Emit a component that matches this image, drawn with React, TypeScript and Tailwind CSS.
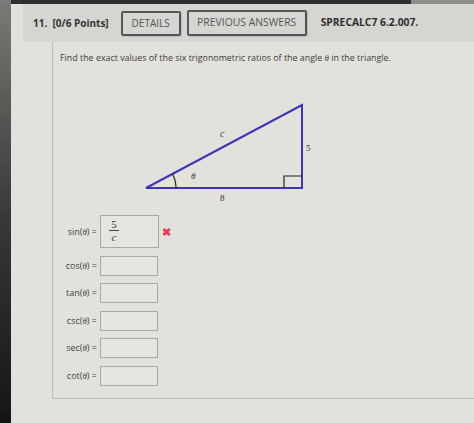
import React from "react";

const font = { fontFamily: '"Open Sans", "Liberation Sans", sans-serif' };
const serif = { fontFamily: '"Liberation Serif", "DejaVu Serif", serif' };

function Row({ fn, children, mt }: { fn: string; children?: React.ReactNode; mt: string }) {
  return (
    <div className={`flex items-center ${mt}`}>
      <div className="w-[40px] text-right text-[9px] text-[#444] pr-[3px] whitespace-nowrap">
        {fn}(<span style={serif} className="italic">θ</span>) =
      </div>
      {children}
    </div>
  );
}

function Box() {
  return <div className="w-[58px] h-[20px] border border-[#a9a9a4] bg-[#e6e5e0]" />;
}

export default function App() {
  return (
    <div style={font} className="w-[474px] h-[423px] bg-[#e2e1dc] flex overflow-hidden">
      <div className="w-[11px] h-full bg-gradient-to-b from-[#7a7a78] via-[#3a3a3a] to-[#151515]" />
      <div className="flex-1 flex flex-col">
        <div className="h-[4px] flex">
          <div className="w-[400px] bg-[#2e2e2e]" />
          <div className="flex-1 bg-[#8d8d8b]" />
        </div>
        <div className="ml-[12px] h-[38px] bg-[#d5d5d1] flex items-center pl-[10px]">
          <span className="text-[10px] font-bold text-[#333]">11.&nbsp; [0/6 Points]</span>
          <div className="ml-[12px] w-[60px] h-[25px] border-2 border-[#555] rounded-[2px] flex items-center justify-center text-[10px] text-[#555] shadow-[1px_1px_0_#bbb]">
            DETAILS
          </div>
          <div className="ml-[6px] w-[120px] h-[26px] border-2 border-[#555] rounded-[2px] flex items-center justify-center text-[10.4px] text-[#555] shadow-[1px_1px_0_#bbb]">
            PREVIOUS ANSWERS
          </div>
          <span className="ml-[14px] text-[10.3px] font-bold text-[#2f2f2f]">SPRECALC7 6.2.007.</span>
        </div>
        <div className="ml-[41px] h-[357px] border-l border-b border-[#bdbdb7] pl-[7px] pt-[9px] flex flex-col">
          <div className="text-[8.9px] text-[#3d3d3d]">
            Find the exact values of the six trigonometric ratios of the angle <span style={serif} className="italic">θ</span> in the triangle.
          </div>
          <div className="ml-[76px] mt-[31px] h-[110px] relative">
            <svg width="180" height="110" viewBox="0 0 180 110">
              <polygon points="10,92 166,9 166,92" fill="none" stroke="#3b36b8" strokeWidth="2" />
              <polyline points="148,92 148,80 166,80" fill="none" stroke="#222" strokeWidth="1.2" />
              <path d="M40,92 A30,30 0 0 0 36.5,78" fill="none" stroke="#222" strokeWidth="1.2" />
              <text x="55" y="83" fontSize="9" fontStyle="italic" fill="#333" style={serif}>θ</text>
              <text x="84" y="41" fontSize="10" fontStyle="italic" fill="#333" style={serif}>c</text>
              <text x="170" y="55" fontSize="9" fill="#333" style={serif}>5</text>
              <text x="84" y="105" fontSize="9" fill="#333" style={serif}>8</text>
            </svg>
          </div>
          <Row fn="sin" mt="mt-[9px]">
            <div className="w-[59px] h-[33px] border border-[#a9a9a4] bg-[#e6e5e0] flex flex-col items-start pl-[8px] pt-[2px]" style={serif}>
              <div className="flex flex-col items-center text-[11px] leading-[12px] text-[#333]">
                <span>5</span>
                <span className="w-[10px] h-px bg-[#444]" />
                <span className="italic">c</span>
              </div>
            </div>
            <span className="ml-[3px] text-[#e04050] text-[11px] font-bold leading-none">✖</span>
          </Row>
          <Row fn="cos" mt="mt-[8px]"><Box /></Row>
          <Row fn="tan" mt="mt-[7px]"><Box /></Row>
          <Row fn="csc" mt="mt-[8px]"><Box /></Row>
          <Row fn="sec" mt="mt-[7px]"><Box /></Row>
          <Row fn="cot" mt="mt-[8px]"><Box /></Row>
        </div>
      </div>
    </div>
  );
}
